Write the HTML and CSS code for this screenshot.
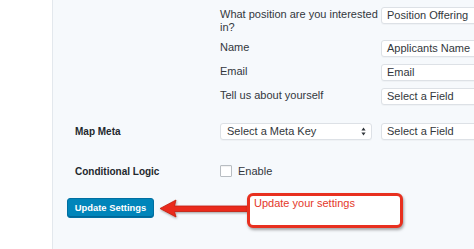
FILE: index.html
```html
<!DOCTYPE html>
<html>
<head>
<meta charset="utf-8">
<link rel="stylesheet" href="styles.css">
</head>
<body>
<div class="page">
  <div class="gutter"></div>
  <div class="panel">
    <div class="form">
      <div class="row">
        <div class="label"></div>
        <div class="mapping">
          <div class="map-row tall">
            <div class="map-label">What position are you interested in?</div>
            <div class="select wide">Position Offering</div>
          </div>
          <div class="map-row">
            <div class="map-label">Name</div>
            <div class="select wide">Applicants Name</div>
          </div>
          <div class="map-row">
            <div class="map-label">Email</div>
            <div class="select wide">Email</div>
          </div>
          <div class="map-row">
            <div class="map-label">Tell us about yourself</div>
            <div class="select wide">Select a Field</div>
          </div>
        </div>
      </div>
      <div class="row row-meta">
        <div class="label">Map Meta</div>
        <div class="meta-fields">
          <div class="select meta-key">
            <span>Select a Meta Key</span>
            <svg class="updown" width="5" height="9" viewBox="0 0 5 9"><path d="M2.5 0.5 L4.6 3.6 L0.4 3.6 Z M2.5 8.5 L4.6 5.4 L0.4 5.4 Z" fill="#32373c"/></svg>
          </div>
          <div class="select wide">Select a Field</div>
        </div>
      </div>
      <div class="row row-logic">
        <div class="label">Conditional Logic</div>
        <div class="check-wrap">
          <span class="checkbox"></span>
          <span class="check-text">Enable</span>
        </div>
      </div>
      <div class="actions">
        <button class="button">Update Settings</button>
      </div>
    </div>
  </div>
  <svg class="arrow" width="96" height="26" viewBox="0 0 96 26">
    <defs>
      <filter id="sh" x="-10%" y="-30%" width="130%" height="180%">
        <feDropShadow dx="0.6" dy="1.2" stdDeviation="0.9" flood-color="#000" flood-opacity="0.35"/>
      </filter>
    </defs>
    <path d="M5 11.5 L21 3 L19.5 9 L96 9 L96 14.5 L19.5 14.5 L21 20 Z" fill="#ea2a1b" stroke="#c11f12" stroke-width="0.8" stroke-linejoin="round" filter="url(#sh)"/>
  </svg>
  <div class="callout">Update your settings</div>
</div>
</body>
</html>
```
FILE: styles.css
```css
html, body {
  margin: 0;
  padding: 0;
  background: #ffffff;
}
body {
  width: 474px;
  height: 249px;
  overflow: hidden;
  font-family: "Liberation Sans", Arial, Helvetica, sans-serif;
  font-size: 11px;
  color: #23282d;
}
.page {
  position: relative;
  display: flex;
  width: 474px;
  height: 249px;
  overflow: hidden;
}
.gutter {
  width: 52px;
  flex: none;
  background: #ffffff;
}
.panel {
  flex: 1;
  min-width: 0;
  background: #f6f9fc;
  border-left: 1px solid #e3e8ed;
  padding: 7px 0 0 14px;
}
.form {
  display: flex;
  flex-direction: column;
}
.row {
  display: flex;
  align-items: flex-start;
}
.label {
  width: 145px;
  padding-left: 8px;
  flex: none;
  font-size: 10px;
  font-weight: bold;
  color: #23282d;
}
.mapping {
  display: flex;
  flex-direction: column;
  gap: 7px;
}
.map-row {
  display: flex;
  align-items: flex-start;
  height: 17px;
}
.map-row.tall {
  height: 26px;
}
.map-label {
  width: 161px;
  flex: none;
  line-height: 13px;
  padding-top: 1px;
  color: #32373c;
}
.select {
  box-sizing: border-box;
  height: 17px;
  line-height: 15px;
  background: #ffffff;
  border: 1px solid #dde1e6;
  border-radius: 3px;
  padding-left: 5px;
  color: #32373c;
  white-space: nowrap;
  box-shadow: 0 1px 1px rgba(0, 0, 0, 0.03);
}
.select.wide {
  width: 130px;
  flex: none;
}
.row-meta {
  margin-top: 18px;
  align-items: center;
  height: 17px;
}
.meta-fields {
  display: flex;
  gap: 9px;
}
.select.meta-key {
  width: 152px;
  flex: none;
  display: flex;
  align-items: center;
  justify-content: space-between;
  padding-left: 6px;
  padding-right: 5px;
}
.updown {
  display: block;
}
.row-logic {
  margin-top: 23px;
  height: 16px;
  align-items: center;
}
.check-wrap {
  display: flex;
  align-items: center;
  gap: 6px;
}
.checkbox {
  box-sizing: border-box;
  width: 12px;
  height: 12px;
  background: #ffffff;
  border: 1px solid #b8bdc2;
  border-radius: 1px;
  box-shadow: inset 0 1px 1px rgba(0, 0, 0, 0.06);
}
.check-text {
  color: #32373c;
}
.actions {
  margin-top: 19px;
}
.button {
  box-sizing: border-box;
  width: 87px;
  height: 20px;
  padding: 0;
  background: #0085ba;
  border: 1px solid #006fa1;
  border-radius: 3px;
  box-shadow: inset 0 -1px 0 #006799;
  color: #ffffff;
  font-family: "Liberation Sans", Arial, Helvetica, sans-serif;
  font-size: 9.4px;
  font-weight: bold;
  line-height: 18px;
  text-align: center;
}
.arrow {
  position: absolute;
  left: 155px;
  top: 197px;
}
.callout {
  position: absolute;
  left: 247px;
  top: 193px;
  box-sizing: border-box;
  width: 156px;
  height: 35px;
  background: #ffffff;
  border: 3px solid #e8301f;
  border-radius: 6px;
  box-shadow: 1px 2px 3px rgba(0, 0, 0, 0.35);
  padding: 1px 0 0 4px;
  color: #e4372a;
  font-size: 11px;
  line-height: 13px;
}
```
